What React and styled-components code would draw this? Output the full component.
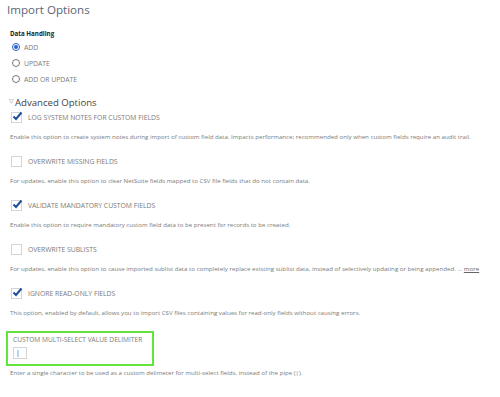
import React from "react";
import styled, { createGlobalStyle } from "styled-components";

const GlobalStyle = createGlobalStyle`
  body {
    margin: 0;
    background: #ffffff;
    font-family: "Open Sans", "Liberation Sans", sans-serif;
  }
`;

const Page = styled.div`
  width: 500px;
  height: 397px;
  overflow: hidden;
  padding: 0 0 0 10px;
  box-sizing: border-box;
`;

const Title = styled.h1`
  margin: 0 0 0 -3px;
  font-size: 11.6px;
  line-height: 20px;
  font-weight: 400;
  color: #5a6675;
`;

const GroupLabel = styled.div`
  margin-top: 9px;
  font-size: 6.2px;
  line-height: 10px;
  font-weight: 700;
  color: #222;
`;

const RadioRow = styled.label`
  display: flex;
  align-items: center;
  height: 16px;
  padding-left: 2px;
  gap: 4px;
  font-size: 6.8px;
  color: #7a7a7a;
`;

const RadioDot = styled.span`
  width: 6px;
  height: 6px;
  border-radius: 50%;
  border: 1px solid ${(p) => (p.$on ? "#2a62c9" : "#777")};
  box-sizing: content-box;
  display: flex;
  align-items: center;
  justify-content: center;
  &::after {
    content: "";
    width: 4px;
    height: 4px;
    border-radius: 50%;
    background: ${(p) => (p.$on ? "#2a62c9" : "transparent")};
  }
`;

const SectionHead = styled.div`
  margin-top: 8px;
  margin-left: -1px;
  display: flex;
  align-items: center;
  height: 14px;
  font-size: 9.6px;
  color: #444;
  gap: 1px;
`;

const Caret = styled.span`
  font-size: 6px;
  color: #888;
  margin-top: -3px;
`;

const OptionBlock = styled.div`
  margin-top: ${(p) => (p.$first ? "1px" : "12px")};
`;

const CheckRow = styled.div`
  display: flex;
  align-items: center;
  height: 14px;
  padding-left: 1px;
  gap: 6px;
  font-size: 6.8px;
  color: #7a7a7a;
`;

const Box = styled.span`
  position: relative;
  width: 9px;
  height: 9px;
  border: 1px solid #d4d4d4;
  background: #fff;
  flex: none;
  svg {
    position: absolute;
    left: 0;
    top: -2px;
  }
`;

const Desc = styled.div`
  margin-top: 8px;
  font-size: 6.15px;
  line-height: 10px;
  color: #7a7a7a;
  white-space: nowrap;
  a {
    color: #666;
    text-decoration: underline;
  }
`;

const Highlight = styled.div`
  margin-top: 13px;
  margin-left: -4px;
  width: 148px;
  border: 2px solid #62e33e;
  box-sizing: border-box;
  padding: 3px 5px 5px;
`;

const FieldLabel = styled.div`
  font-size: 6.6px;
  line-height: 8px;
  color: #7a7a7a;
`;

const Input = styled.div`
  margin-top: 3px;
  width: 14px;
  height: 12px;
  border: 1px solid #d4d4d4;
  box-sizing: border-box;
  font-size: 7px;
  line-height: 10px;
  padding-left: 2px;
  color: #333;
`;

const FootDesc = styled(Desc)`
  margin-top: 2px;
`;

const Check = () => (
  <svg width="11" height="10" viewBox="0 0 11 10">
    <path d="M1.5 5.5 L4 8 L9.5 1.5" fill="none" stroke="#1f4e96" strokeWidth="2" />
  </svg>
);

const options = [
  {
    label: "LOG SYSTEM NOTES FOR CUSTOM FIELDS",
    on: true,
    desc: "Enable this option to create system notes during import of custom field data. Impacts performance; recommended only when custom fields require an audit trail.",
  },
  {
    label: "OVERWRITE MISSING FIELDS",
    on: false,
    desc: "For updates, enable this option to clear NetSuite fields mapped to CSV file fields that do not contain data.",
  },
  {
    label: "VALIDATE MANDATORY CUSTOM FIELDS",
    on: true,
    desc: "Enable this option to require mandatory custom field data to be present for records to be created.",
  },
  {
    label: "OVERWRITE SUBLISTS",
    on: false,
    desc: "For updates, enable this option to cause imported sublist data to completely replace existing sublist data, instead of selectively updating or being appended.",
    more: true,
  },
  {
    label: "IGNORE READ-ONLY FIELDS",
    on: true,
    desc: "This option, enabled by default, allows you to import CSV files containing values for read-only fields without causing errors.",
  },
];

const radios = [
  { label: "ADD", on: true },
  { label: "UPDATE", on: false },
  { label: "ADD OR UPDATE", on: false },
];

export default function App() {
  return (
    <>
      <GlobalStyle />
      <Page>
        <Title>Import Options</Title>
        <GroupLabel>Data Handling</GroupLabel>
        {radios.map((r) => (
          <RadioRow key={r.label}>
            <RadioDot $on={r.on} />
            {r.label}
          </RadioRow>
        ))}
        <SectionHead>
          <Caret>▽</Caret>
          Advanced Options
        </SectionHead>
        {options.map((o, i) => (
          <OptionBlock key={o.label} $first={i === 0}>
            <CheckRow>
              <Box>{o.on && <Check />}</Box>
              {o.label}
            </CheckRow>
            <Desc>
              {o.desc}
              {o.more && (
                <>
                  {" ... "}
                  <a>more</a>
                </>
              )}
            </Desc>
          </OptionBlock>
        ))}
        <Highlight>
          <FieldLabel>CUSTOM MULTI-SELECT VALUE DELIMITER</FieldLabel>
          <Input>|</Input>
        </Highlight>
        <FootDesc>
          Enter a single character to be used as a custom delimeter for multi-select fields, instead of the pipe (|).
        </FootDesc>
      </Page>
    </>
  );
}
